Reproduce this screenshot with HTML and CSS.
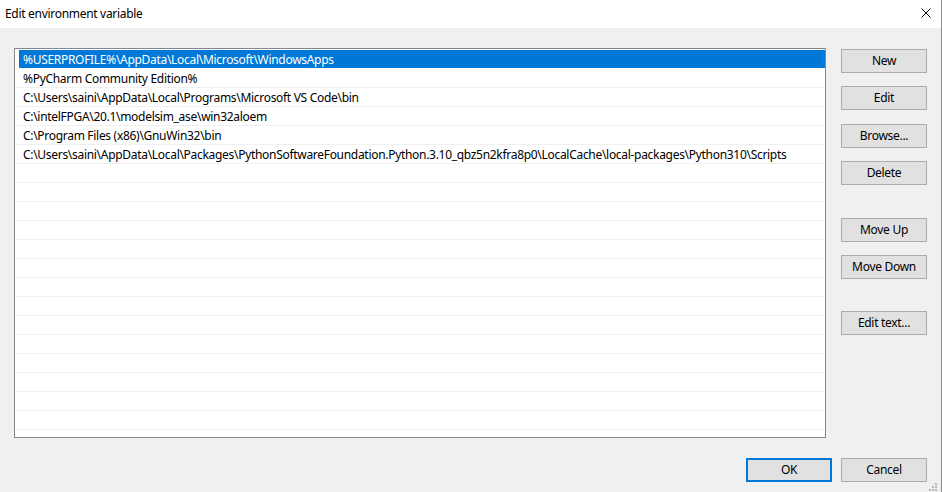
FILE: index.html
```html
<!DOCTYPE html>
<html lang="en">
<head>
<meta charset="utf-8">
<title>Edit environment variable</title>
<link rel="stylesheet" href="styles.css">
</head>
<body>
<div class="window">
  <div class="titlebar">
    <span class="title">Edit environment variable</span>
    <svg class="close" width="10" height="10" viewBox="0 0 10 10"><path d="M0.5 0.5 L9.5 9.5 M9.5 0.5 L0.5 9.5" stroke="#000" stroke-width="1" fill="none"/></svg>
  </div>
  <div class="content">
    <div class="main">
      <div class="list">
        <div class="row sel">%USERPROFILE%\AppData\Local\Microsoft\WindowsApps</div>
        <div class="row">%PyCharm Community Edition%</div>
        <div class="row">C:\Users\saini\AppData\Local\Programs\Microsoft VS Code\bin</div>
        <div class="row">C:\intelFPGA\20.1\modelsim_ase\win32aloem</div>
        <div class="row">C:\Program Files (x86)\GnuWin32\bin</div>
        <div class="row">C:\Users\saini\AppData\Local\Packages\PythonSoftwareFoundation.Python.3.10_qbz5n2kfra8p0\LocalCache\local-packages\Python310\Scripts</div>
        <div class="row"></div>
        <div class="row"></div>
        <div class="row"></div>
        <div class="row"></div>
        <div class="row"></div>
        <div class="row"></div>
        <div class="row"></div>
        <div class="row"></div>
        <div class="row"></div>
        <div class="row"></div>
        <div class="row"></div>
        <div class="row"></div>
        <div class="row"></div>
        <div class="row"></div>
      </div>
      <div class="side">
        <button class="btn">New</button>
        <button class="btn">Edit</button>
        <button class="btn wide-gap">Browse...</button>
        <button class="btn">Delete</button>
        <button class="btn group-gap">Move Up</button>
        <button class="btn">Move Down</button>
        <button class="btn group-gap2">Edit text...</button>
      </div>
    </div>
    <div class="footer">
      <button class="btn default">OK</button>
      <button class="btn">Cancel</button>
    </div>
  </div>
  <svg class="grip" width="10" height="10" viewBox="0 0 10 10">
    <rect x="7" y="1" width="2" height="2" fill="#b8b8b8"/>
    <rect x="4" y="4" width="2" height="2" fill="#b8b8b8"/>
    <rect x="7" y="4" width="2" height="2" fill="#b8b8b8"/>
    <rect x="1" y="7" width="2" height="2" fill="#b8b8b8"/>
    <rect x="4" y="7" width="2" height="2" fill="#b8b8b8"/>
    <rect x="7" y="7" width="2" height="2" fill="#b8b8b8"/>
  </svg>
</div>
</body>
</html>
```

FILE: styles.css
```css
* { box-sizing: border-box; }
html, body {
  margin: 0;
  padding: 0;
  width: 942px;
  height: 492px;
  overflow: hidden;
}
body {
  font-family: "Segoe UI", "Noto Sans", "Open Sans", sans-serif;
  font-size: 12px;
  letter-spacing: -0.3px;
  color: #000;
  background: #f0f0f0;
}
.window {
  position: relative;
  width: 942px;
  height: 492px;
  border-right: 1px solid #8c8c8c;
  background: #f0f0f0;
  display: flex;
  flex-direction: column;
}
.titlebar {
  height: 28px;
  background: #fff;
  display: flex;
  align-items: center;
  justify-content: space-between;
  padding: 0 10px 0 5px;
}
.title {
  font-size: 12px;
  line-height: 16px;
}
.close {
  display: block;
  margin-bottom: 2px;
}
.content {
  padding: 20px 14px 0 14px;
  display: flex;
  flex-direction: column;
}
.main {
  display: flex;
  align-items: flex-start;
}
.list {
  width: 812px;
  height: 390px;
  border: 1px solid #828790;
  background: #fff;
  padding: 1px 1px 0 1px;
  overflow: hidden;
}
.row {
  height: 19px;
  line-height: 18px;
  padding-top: 1px;
  padding-left: 7px;
  border-bottom: 1px solid #f0f0f0;
  white-space: nowrap;
  overflow: hidden;
}
.row.sel {
  margin-left: 3px;
  padding-left: 4px;
  margin-right: -1px;
  background: #0078d7;
  color: #fff;
  border-bottom-color: #fff;
}
.side {
  margin-left: 15px;
  padding-top: 1px;
  display: flex;
  flex-direction: column;
}
.btn {
  width: 86px;
  height: 24px;
  padding: 0;
  margin: 0;
  font-family: inherit;
  font-size: 12px;
  letter-spacing: -0.3px;
  color: #000;
  background: #e1e1e1;
  border: 1px solid #adadad;
  line-height: 20px;
}
.side .btn + .btn { margin-top: 13px; }
.side .btn.wide-gap { margin-top: 14px; }
.side .btn.group-gap { margin-top: 33px; }
.side .btn.group-gap2 { margin-top: 32px; }
.footer {
  margin-top: 20px;
  display: flex;
  justify-content: flex-end;
  gap: 9px;
}
.btn.default {
  border: 2px solid #0078d7;
}
.grip {
  position: absolute;
  right: 3px;
  bottom: 0;
}
```
